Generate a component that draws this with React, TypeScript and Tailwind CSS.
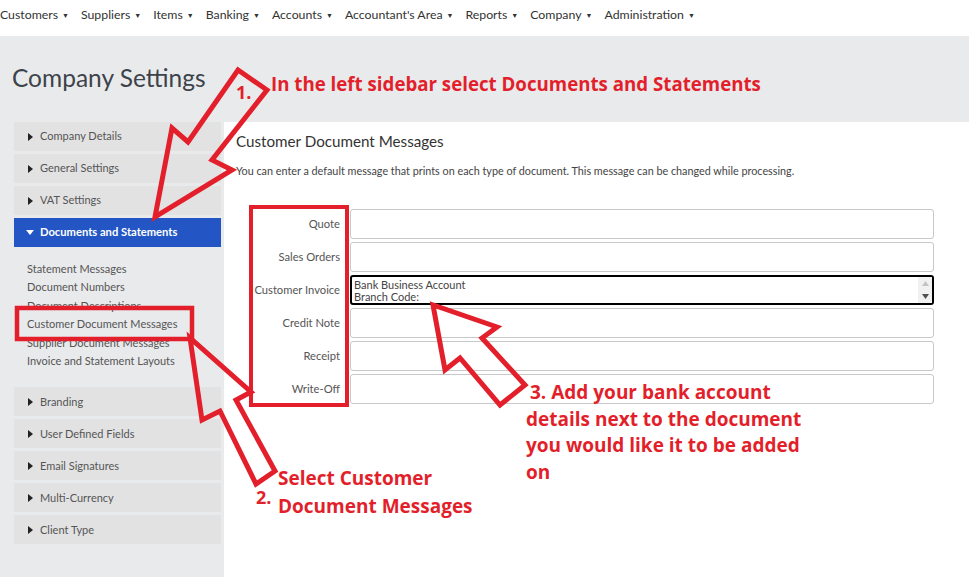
import React from "react";

const navItems = [
  "Customers",
  "Suppliers",
  "Items",
  "Banking",
  "Accounts",
  "Accountant's Area",
  "Reports",
  "Company",
  "Administration",
];

const topItems = ["Company Details", "General Settings", "VAT Settings"];
const bottomItems = ["Branding", "User Defined Fields", "Email Signatures", "Multi-Currency", "Client Type"];
const subItems = [
  "Statement Messages",
  "Document Numbers",
  "Document Descriptions",
  "Customer Document Messages",
  "Supplier Document Messages",
  "Invoice and Statement Layouts",
];
const rows = ["Quote", "Sales Orders", "Customer Invoice", "Credit Note", "Receipt", "Write-Off"];

function RightTri() {
  return (
    <svg width="5" height="8" viewBox="0 0 5 8" className="shrink-0">
      <polygon points="0,0 5,4 0,8" fill="#222" />
    </svg>
  );
}

function SideItem({ label }: { label: string }) {
  return (
    <div className="h-[29px] bg-[#e2e2e3] flex items-center pl-[14px] gap-[7px] text-[11px] text-[#555]">
      <RightTri />
      <span>{label}</span>
    </div>
  );
}

export default function App() {
  const red = "#e21f2a";
  return (
    <div className="relative w-[969px] h-[577px] overflow-hidden bg-[#e9eaec] font-['Lato',sans-serif]">
      <nav className="h-[36px] bg-white flex items-start pt-[7px] gap-[12px] text-[12.3px] leading-[16px] text-[#333]">
        {navItems.map((n) => (
          <span key={n} className="flex items-center whitespace-nowrap">
            {n}
            <span className="ml-[4px] text-[7px] leading-none">▼</span>
          </span>
        ))}
      </nav>

      <div className="h-[86px] pl-[12px] pt-[27px]">
        <h1 className="text-[24.5px] leading-[30px] text-[#3d434a]">Company Settings</h1>
      </div>

      <div className="flex h-[455px]">
        <aside className="w-[224px] pl-[14px] pr-[3px]">
          <div className="flex flex-col gap-[3px]">
            {topItems.map((t) => (
              <SideItem key={t} label={t} />
            ))}
            <div className="h-[29px] bg-[#2356c4] flex items-center pl-[12px] gap-[6px] text-[11.2px] font-bold text-white">
              <svg width="8" height="5" viewBox="0 0 8 5">
                <polygon points="0,0 8,0 4,5" fill="#fff" />
              </svg>
              <span>Documents and Statements</span>
            </div>
          </div>
          <div className="pt-[13px] pb-[17px] pl-[13px] text-[11px] leading-[18.4px] text-[#555]">
            {subItems.map((s) => (
              <div key={s}>{s}</div>
            ))}
          </div>
          <div className="flex flex-col gap-[3px]">
            {bottomItems.map((t) => (
              <SideItem key={t} label={t} />
            ))}
          </div>
        </aside>

        <main className="flex-1 bg-white pl-[12px] pr-[35px] pt-[9px]">
          <h2 className="text-[15.2px] leading-[20px] text-[#333]">Customer Document Messages</h2>
          <p className="mt-[13px] text-[10.8px] leading-[14px] text-[#444] whitespace-nowrap">
            You can enter a default message that prints on each type of document. This message can be changed while processing.
          </p>
          <div className="mt-[31px] ml-[14px] grid grid-cols-[90px_1fr] gap-x-[10px] gap-y-[3px]">
            {rows.map((r) => (
              <React.Fragment key={r}>
                <div className="h-[30px] flex items-center justify-end text-[11.2px] text-[#555] whitespace-nowrap">{r}</div>
                {r === "Customer Invoice" ? (
                  <div className="h-[30px] border-2 border-black rounded-[3px] flex">
                    <div className="flex-1 pl-[2px] pt-[2px] text-[11px] leading-[12px] text-[#444]">
                      <div>Bank Business Account</div>
                      <div>Branch Code:</div>
                    </div>
                    <div className="w-[14px] bg-[#f1f1f1] flex flex-col items-center justify-between py-[4px]">
                      <svg width="7" height="5" viewBox="0 0 7 5">
                        <polygon points="0,5 7,5 3.5,0" fill="#c4c4c4" />
                      </svg>
                      <svg width="7" height="5" viewBox="0 0 7 5">
                        <polygon points="0,0 7,0 3.5,5" fill="#505050" />
                      </svg>
                    </div>
                  </div>
                ) : (
                  <div className="h-[30px] border border-[#c8c8c8] rounded-[3px] bg-white" />
                )}
              </React.Fragment>
            ))}
          </div>
        </main>
      </div>

      {/* annotation drawings */}
      <svg className="absolute inset-0 pointer-events-none" width="969" height="577" viewBox="0 0 969 577">
        <g fill="none" stroke={red} strokeWidth="5" strokeLinejoin="miter">
          <polygon points="155,217 172,128 188,142 238,70 267,90 212,160 232,170" />
          <polygon points="190,338 202,420 220,411 256,484 275,471 236,400 251,392" />
          <polygon points="433,305 445,370 460,358 500,405 525,385 482,338 497,327" />
          <rect x="17" y="308" width="175" height="31" strokeWidth="4.5" />
          <rect x="251" y="207" width="96" height="198" strokeWidth="4" />
        </g>
      </svg>

      <div className="absolute inset-0 pointer-events-none font-['Open_Sans',sans-serif] font-bold text-[#e21f2a]">
        <div className="absolute left-[236px] top-[79px] text-[18px] leading-[26px]">1.</div>
        <div className="absolute left-[271px] top-[71px] text-[18.7px] leading-[26px] whitespace-nowrap">
          In the left sidebar select Documents and Statements
        </div>
        <div className="absolute left-[256px] top-[484px] text-[18px] leading-[26px]">2.</div>
        <div className="absolute left-[278px] top-[464px] text-[19px] leading-[28px] whitespace-nowrap">
          <div>Select Customer</div>
          <div>Document Messages</div>
        </div>
        <div className="absolute left-[526px] top-[379px] text-[19px] leading-[26.6px] whitespace-nowrap">
          <div className="pl-[4px]">3. Add your bank account</div>
          <div>details next to the document</div>
          <div>you would like it to be added</div>
          <div>on</div>
        </div>
      </div>
    </div>
  );
}
